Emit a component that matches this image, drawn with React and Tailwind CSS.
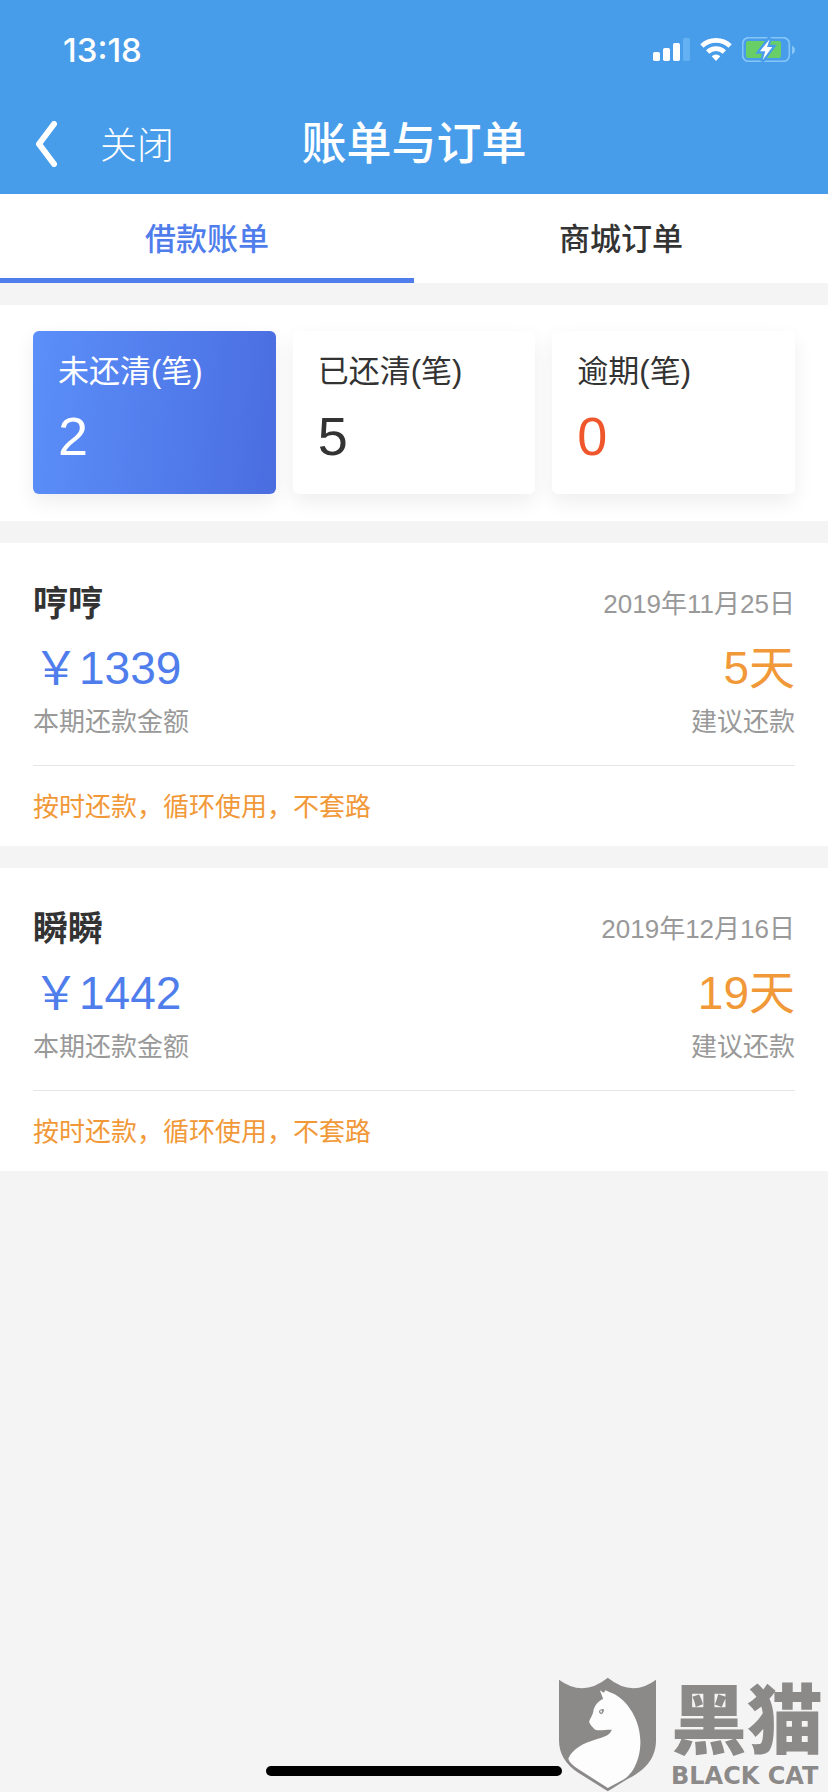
import { useState } from "react"
import clsx from "clsx"

const tabs = ["借款账单", "商城订单"]

const stats = [
    { key: "unpaid", label: "未还清(笔)", count: 2 },
    { key: "paid", label: "已还清(笔)", count: 5 },
    { key: "overdue", label: "逾期(笔)", count: 0 },
]

const bills = [
    { id: 1, name: "哼哼", amount: 1339, date: "2019年11月25日", days: 5 },
    { id: 2, name: "瞬瞬", amount: 1442, date: "2019年12月16日", days: 19 },
]

function StatusBar() {
    return (
        <div className="flex h-[99px] items-center justify-between px-[33px]">
            <span className="pl-[30px] font-['Inter',sans-serif] text-[33px] leading-10 font-medium">13:18</span>
            <div className="flex items-center gap-[10px]">
                <svg width="37" height="25" viewBox="39 36 111 75">
                    <rect x="39" y="81" width="21" height="27" rx="5" fill="#fff" />
                    <rect x="69" y="69" width="21" height="39" rx="5" fill="#fff" />
                    <rect x="99" y="54" width="21" height="54" rx="5" fill="#fff" />
                    <rect x="129" y="39" width="21" height="69" rx="5" fill="#63b1f3" />
                </svg>
                <svg width="32" height="25" viewBox="178 36 96 75">
                    <g fill="none" stroke="#fff" strokeWidth="14">
                        <path d="M183.6 63.1A61 61 0 0 1 268.4 63.1" />
                        <path d="M201 81.1A36 36 0 0 1 251 81.1" />
                    </g>
                    <path d="M213 94A18 18 0 0 1 239 94L226 108Z" fill="#fff" />
                </svg>
                <svg width="53" height="25" viewBox="303 36 159 75">
                    <rect x="305" y="38" width="140" height="71" rx="18" fill="none" stroke="#86c6f6" strokeWidth="5" />
                    <rect x="315" y="48" width="105" height="51" rx="6" fill="#68cf67" />
                    <path d="M453 62Q462 66 462 75T453 88Z" fill="#86c6f6" />
                    <path d="M387 38L355 80H371L363 109L396 65H380Z" fill="#fff" stroke="#489dea" strokeWidth="12" />
                    <path d="M386 43L357 79H373L365 105L394 66H378Z" fill="#fff" />
                </svg>
            </div>
        </div>
    )
}

function Header() {
    return (
        <header className="bg-[#489dea] pb-[5px] text-white">
            <StatusBar />
            <div className="grid h-[90px] grid-cols-[1fr_auto_1fr] items-center">
                <div className="flex items-center gap-[43px] pl-[35px]">
                    <button aria-label="返回">
                        <svg width="22" height="46" viewBox="0 0 22 46" fill="none" stroke="#fff" strokeWidth="6" strokeLinecap="round" strokeLinejoin="round">
                            <path d="M19 3L4 23L19 43" />
                        </svg>
                    </button>
                    <button className="pt-1.5 text-[37px] leading-[48px] font-light">关闭</button>
                </div>
                <h1 className="pt-0.5 text-[45px] leading-[56px] font-medium">账单与订单</h1>
            </div>
        </header>
    )
}

function Bill({ bill }) {
    return (
        <article className="bg-white px-[33px] pt-[41px]">
            <div className="border-b border-[#e6e6e6] pb-[25px]">
                <div className="mb-4 flex items-center justify-between leading-10">
                    <h2 className="text-[35px] font-bold text-[#333]">{bill.name}</h2>
                    <span className="text-[26px] text-[#999]">{bill.date}</span>
                </div>
                <div className="mb-2 flex items-center justify-between text-[46px] leading-[56px]">
                    <span className="text-[#4f7eec]">￥{bill.amount}</span>
                    <span className="text-[#f19938]">{bill.days}天</span>
                </div>
                <div className="flex items-center justify-between text-[26px] leading-9 text-[#999]">
                    <span>本期还款金额</span>
                    <span>建议还款</span>
                </div>
            </div>
            <p className="pt-[21px] pb-[19px] text-[26px] leading-10 text-[#f19938]">按时还款，循环使用，不套路</p>
        </article>
    )
}

function Watermark() {
    return (
        <div className="absolute right-0 bottom-0 flex items-end gap-[15px] text-[#8c8989]">
            <svg width="97" height="115" viewBox="57 50 292 346">
                <path d="M57 58Q130 112 204 52Q278 112 349 58V240C349 300 310 333 262 358L204 394L115 338Q57 300 57 240Z" fill="#8c8989" />
                <path
                    d="M180 90L192 97L197 90L210 96C252 108 302 170 302 245C302 300 278 345 250 359L204 384L118 329C100 317 88 307 85 295C100 265 130 250 165 239C190 232 210 227 216 209C200 208 180 213 166 209C160 203 148 192 148 183C150 175 158 165 160 155C163 135 175 122 190 116Z"
                    fill="#fdfdfd"
                />
                <path d="M177 152Q184 145 192 147Q193 158 184 162Q177 160 177 152Z" fill="#8c8989" />
                <path d="M183 149L187 153L184 159L181 154Z" fill="#fdfdfd" />
            </svg>
            <div className="w-[157px] pb-0.5">
                <div className="text-[76px] leading-[80px] font-black">黑猫</div>
                <div className="font-['DejaVu_Sans',sans-serif] text-2xl leading-7 font-bold whitespace-nowrap">BLACK CAT</div>
            </div>
        </div>
    )
}

export default function App() {
    const [activeTab, setActiveTab] = useState(0)
    const [activeStat, setActiveStat] = useState("unpaid")

    return (
        <div className="relative min-h-screen bg-[#f4f4f4] font-['Liberation_Sans','Noto_Sans_CJK_SC',sans-serif]">
            <Header />

            <nav className="grid grid-cols-2 bg-white">
                {tabs.map((tab, i) => (
                    <button
                        key={tab}
                        onClick={() => setActiveTab(i)}
                        className={clsx(
                            "h-[89px] border-b-[5px] pt-2 text-[31px] leading-10 font-medium",
                            activeTab === i ? "border-[#4f7eec] text-[#4f7eec]" : "border-transparent text-[#333]"
                        )}
                    >
                        {tab}
                    </button>
                ))}
            </nav>

            <main className="mt-[22px] flex flex-col gap-[22px]">
                <section className="grid grid-cols-3 gap-[17px] bg-white px-[33px] pt-[26px] pb-[27px]">
                    {stats.map(stat => (
                        <button
                            key={stat.key}
                            onClick={() => setActiveStat(stat.key)}
                            className={clsx(
                                "rounded-md px-[25px] pt-[21px] pb-7 text-left shadow-[0_8px_20px_rgba(0,0,0,0.07)]",
                                activeStat === stat.key
                                    ? "bg-linear-[96deg,#5b8ff9,#4a6de0] text-white"
                                    : "bg-white text-[#333]"
                            )}
                        >
                            <span className="block text-[31px] leading-10">{stat.label}</span>
                            <span className={clsx("mt-[14px] block text-[54px] leading-[60px]", stat.key === "overdue" && "text-[#f0562c]")}>
                                {stat.count}
                            </span>
                        </button>
                    ))}
                </section>

                {bills.map(bill => <Bill key={bill.id} bill={bill} />)}
            </main>

            {/* home indicator */}
            <div className="absolute bottom-4 left-1/2 h-[10px] w-[296px] -translate-x-1/2 rounded-full bg-black" />
            <Watermark />
        </div>
    )
}
